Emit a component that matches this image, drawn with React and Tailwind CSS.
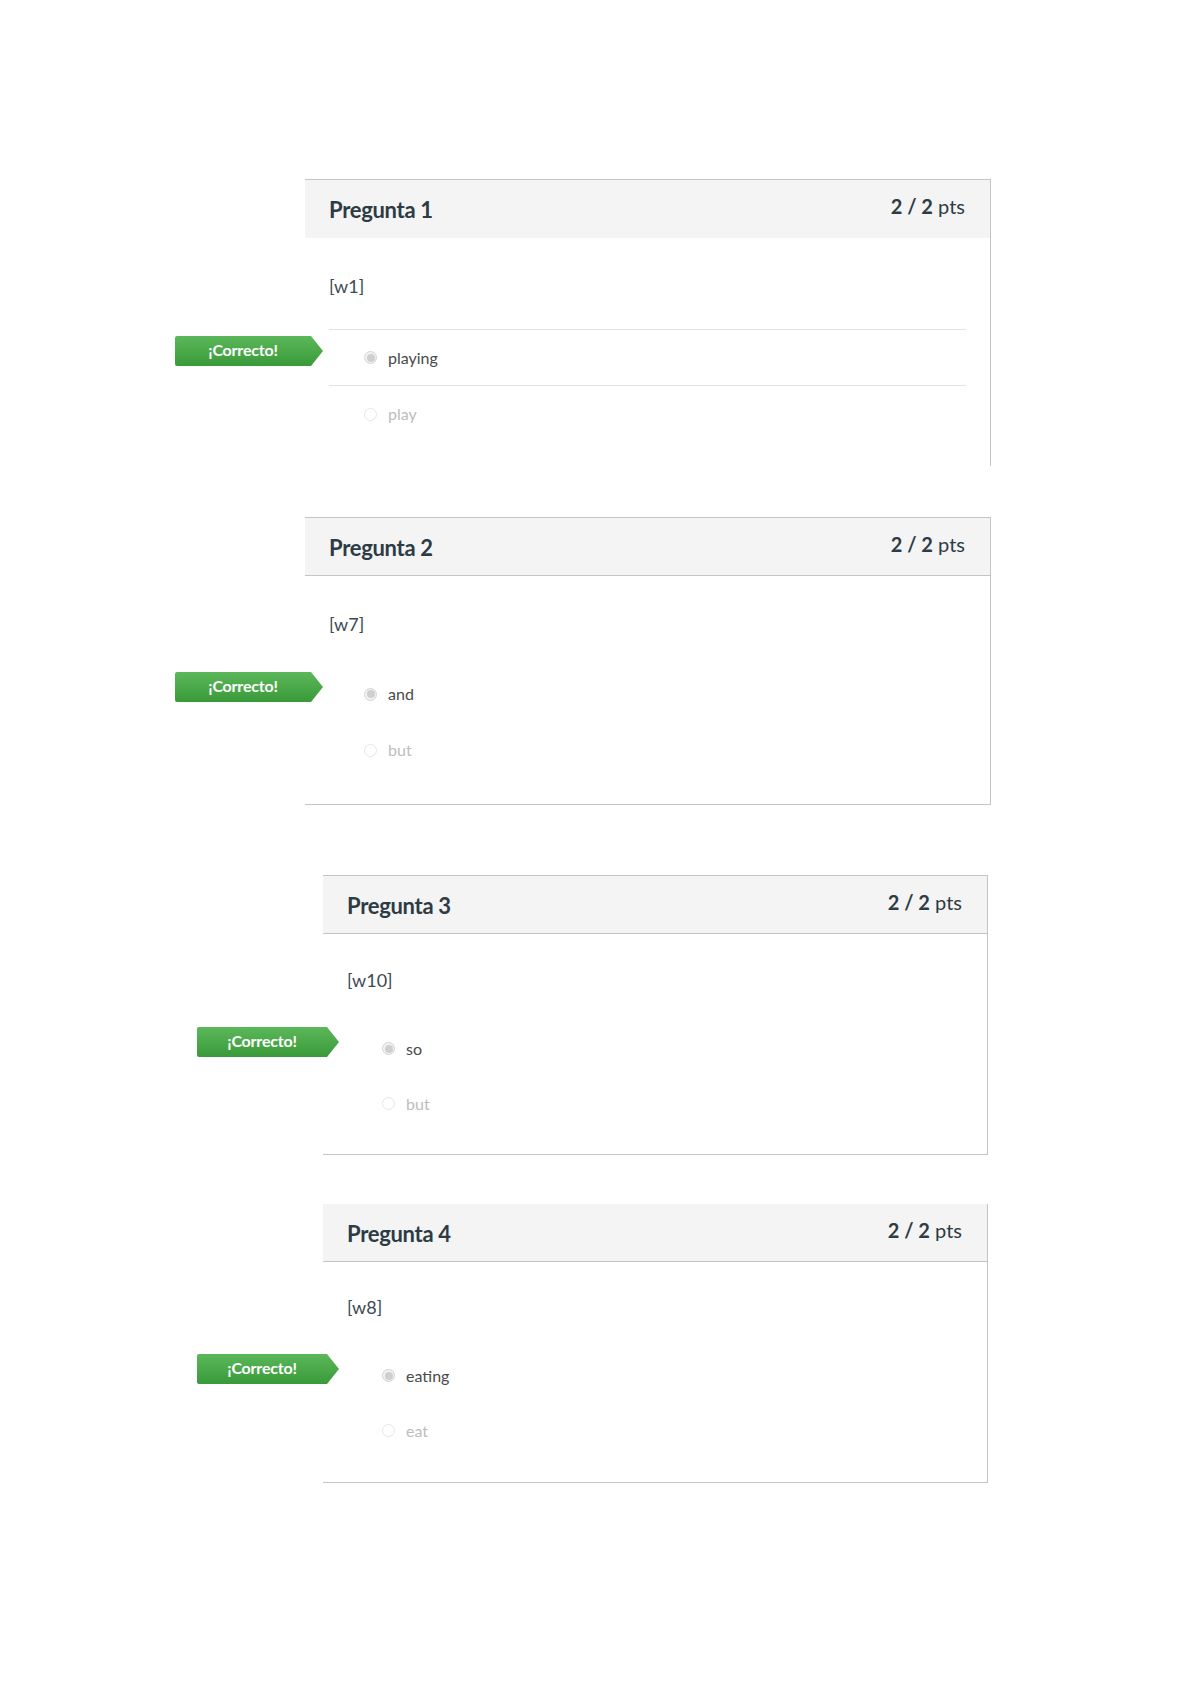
import React from 'react';

const questions = [
  {
    n: 1, prompt: '[w1]', options: ['playing', 'play'],
    card: 'ml-[305px] w-[686px] border-t border-r', header: '', lines: true,
    body: 'pt-[37px] pb-[24px]', gap: 'mt-[32px]', row: 'h-[56px]',
    badge: 'left-[-154px] w-[148px]',
  },
  {
    n: 2, prompt: '[w7]', options: ['and', 'but'],
    card: 'mt-[51px] ml-[305px] w-[686px] border-t border-r border-b', header: 'border-b', lines: false,
    body: 'pt-[37px] pb-[26px]', gap: 'mt-[31px]', row: 'h-[56px]',
    badge: 'left-[-154px] w-[148px]',
  },
  {
    n: 3, prompt: '[w10]', options: ['so', 'but'],
    card: 'mt-[70px] ml-[323px] w-[665px] border-t border-r border-b', header: 'border-b', lines: false,
    body: 'pt-[35px] pb-[23px]', gap: 'mt-[30px]', row: 'h-[55px]',
    badge: 'left-[-150px] w-[142px]',
  },
  {
    n: 4, prompt: '[w8]', options: ['eating', 'eat'],
    card: 'mt-[49px] ml-[323px] w-[665px] border-r border-b', header: 'border-b', lines: false,
    body: 'pt-[34px] pb-[24px]', gap: 'mt-[30px]', row: 'h-[55px]',
    badge: 'left-[-150px] w-[142px]',
  },
];

const Badge = ({ cls }) => (
  <div className={`absolute top-[6px] h-[30px] ${cls} flex items-center pr-[12px] bg-gradient-to-b from-[#5bb85a] to-[#399a39] [clip-path:polygon(0_0,calc(100%-12px)_0,100%_50%,calc(100%-12px)_100%,0_100%)] rounded-l-[2px]`}>
    <span className="w-full text-center text-white text-[16px] font-bold leading-none tracking-[-0.2px] -mt-[2px]">¡Correcto!</span>
  </div>
);

const Radio = ({ on }) => (
  on ? (
    <span className="w-[13px] h-[13px] rounded-full border border-[#d4d4d4] bg-[#f2f2f2] flex items-center justify-center">
      <span className="w-[8px] h-[8px] rounded-full bg-[#cfcfcf]" />
    </span>
  ) : (
    <span className="w-[13px] h-[13px] rounded-full border border-[#e6e6e6] bg-white" />
  )
);

const Question = ({ q }) => (
  <div className={`${q.card} border-[#c4c4c4] bg-white`}>
    <div className={`h-[58px] bg-[#f4f4f4] ${q.header} border-[#c4c4c4] flex justify-between pl-[24px] pr-[25px]`}>
      <h3 className="mt-[18px] text-[22px] font-bold text-[#2d3b45] leading-[24px] tracking-[-0.3px]">Pregunta {q.n}</h3>
      <div className="mt-[14px] text-[20px] text-[#2d3b45] leading-[24px]">
        <span className="font-bold">2 / 2</span> pts
      </div>
    </div>
    <div className={`px-[24px] ${q.body}`}>
      <p className="text-[18px] leading-[22px] text-[#3d4a54]">{q.prompt}</p>
      <div className={`${q.gap} ${q.lines ? 'border-t border-[#e3e3e3]' : ''}`}>
        {q.options.map((o, i) => (
          <div key={o} className={`relative ${q.row} flex items-center pl-[35px] gap-[11px] ${q.lines && i === 0 ? 'border-b border-[#e3e3e3]' : ''}`}>
            {i === 0 && <Badge cls={q.badge} />}
            <Radio on={i === 0} />
            <span className={`text-[16px] ${i === 0 ? 'text-[#4a4a4a]' : 'text-[#bdbdbd]'}`}>{o}</span>
          </div>
        ))}
      </div>
    </div>
  </div>
);

export default function App() {
  return (
    <div className="min-h-[1698px] bg-white pt-[179px] font-['Lato','Liberation_Sans',sans-serif]">
      {questions.map(q => <Question key={q.n} q={q} />)}
    </div>
  );
}
